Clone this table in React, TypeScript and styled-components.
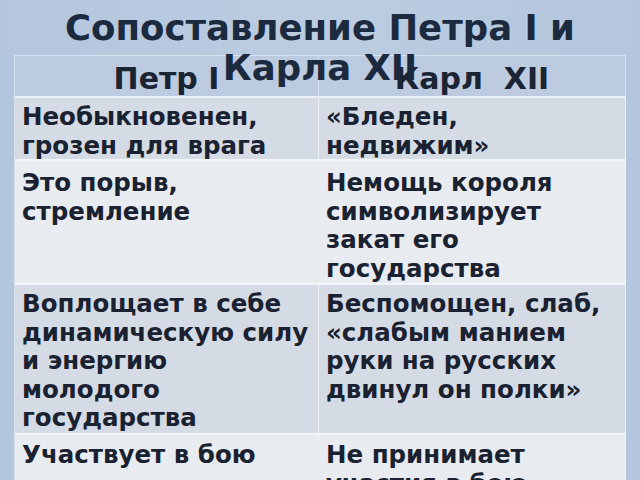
import React from 'react';
import styled, { createGlobalStyle } from 'styled-components';

const GlobalStyle = createGlobalStyle`
    html, body {
        margin: 0;
        padding: 0;
        background: #b9cadf;
    }
`;

const Slide = styled.div`
    width: 640px;
    height: 480px;
    overflow: hidden;
    background: linear-gradient(90deg, #b3c6dd 0%, #bccde1 50%, #b3c6dd 100%);
    font-family: 'DejaVu Sans', 'Noto Sans', sans-serif;
    font-weight: bold;
    padding-top: 8px;
    box-sizing: border-box;
`;

const Title = styled.h1`
    position: relative;
    z-index: 1;
    margin: 0 0 -33px;
    font-size: 35.5px;
    line-height: 40px;
    font-weight: bold;
    text-align: center;
    color: #1b2a3e;
`;

const Table = styled.div`
    margin-left: 14px;
    width: 611px;
    display: grid;
    grid-template-columns: 304px 1fr;
    border-top: 1px solid #d8e2ee;
    border-left: 1px solid #d8e2ee;
`;

const HeadCell = styled.div`
    height: 40px;
    background: #bccbdf;
    border-right: 1px solid #d8e2ee;
    border-bottom: 2px solid #eef2f7;
    font-size: 30px;
    line-height: 46px;
    text-align: center;
    color: #1b2433;
    white-space: pre;
`;

const Cell = styled.div<{ $shade: boolean; $h: number; $pad: number }>`
    height: ${(p) => p.$h}px;
    box-sizing: border-box;
    padding: ${(p) => p.$pad}px 6px 0 7px;
    background: ${(p) => (p.$shade ? '#d4dbe4' : '#e8ecf0')};
    border-right: 1px solid #eef2f7;
    border-bottom: 2px solid #f2f5f8;
    font-size: 24.5px;
    line-height: 28.5px;
    color: #1a2130;
    white-space: nowrap;
`;

const rows: { left: string[]; right: string[]; h: number; pad: number }[] = [
    { left: ['Необыкновенен,', 'грозен для врага'], right: ['«Бледен,', 'недвижим»'], h: 63, pad: 5 },
    {
        left: ['Это порыв,', 'стремление'],
        right: ['Немощь короля', 'символизирует', 'закат его', 'государства'],
        h: 124,
        pad: 8,
    },
    {
        left: ['Воплощает в себе', 'динамическую силу', 'и энергию', 'молодого', 'государства'],
        right: ['Беспомощен, слаб,', '«слабым манием', 'руки на русских', 'двинул он полки»'],
        h: 150,
        pad: 5,
    },
    { left: ['Участвует в бою'], right: ['Не принимает', 'участия в бою'], h: 90, pad: 6 },
];

export default function App() {
    return (
        <>
            <GlobalStyle />
            <Slide>
                <Title>
                    Сопоставление Петра I и
                    <br />
                    Карла XII
                </Title>
                <Table>
                    <HeadCell>Петр I</HeadCell>
                    <HeadCell>{'Карл  XII'}</HeadCell>
                    {rows.map((row, i) => (
                        <React.Fragment key={i}>
                            <Cell $shade={i % 2 === 0} $h={row.h} $pad={row.pad}>
                                {row.left.map((l, j) => (
                                    <div key={j}>{l}</div>
                                ))}
                            </Cell>
                            <Cell $shade={i % 2 === 0} $h={row.h} $pad={row.pad}>
                                {row.right.map((l, j) => (
                                    <div key={j}>{l}</div>
                                ))}
                            </Cell>
                        </React.Fragment>
                    ))}
                </Table>
            </Slide>
        </>
    );
}
